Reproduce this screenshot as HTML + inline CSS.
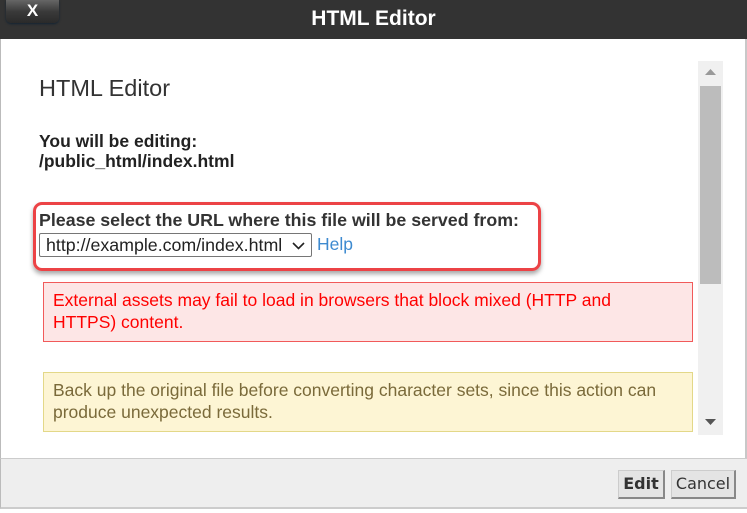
<!DOCTYPE html>
<html><head><style>
*{box-sizing:border-box;margin:0;padding:0}
body{width:747px;height:513px;overflow:hidden;background:#fff;font-family:"Liberation Sans",Arial,sans-serif;position:relative}
.top{position:absolute;left:0;top:0;width:747px;height:39px;background:#333;color:#fff;font-weight:bold;font-size:21px;text-align:center;line-height:38px}
.x{position:absolute;left:6px;top:0;width:53px;height:23px;background:linear-gradient(#666,#3a3a3a 50%,#2a2a2a);border-radius:0 0 5px 5px;box-shadow:0 1px 2px #123;color:#fff;font-size:17px;line-height:21px;text-align:center}
.body{position:absolute;left:0;top:39px;width:747px;height:420px;border-left:1px solid #bbb;border-right:2px solid #c8c8c8}
.abs{position:absolute}
.t{color:#333}
.sb{position:absolute;left:698px;top:61px;width:25px;height:374px;background:#f0f0f0}
.th{position:absolute;left:700px;top:86px;width:21px;height:198px;background:#bcbcbc}
.foot{position:absolute;left:0;top:458px;width:747px;height:51px;background:#eee;border-top:1px solid #ccc;border-bottom:2px solid #ccc;border-left:1px solid #bbb}
.btn{position:absolute;top:470px;height:29px;background:#e4e4e4;border:1px solid #ccc;border-right:2px solid #888;border-bottom:2px solid #888;font-family:"DejaVu Sans",sans-serif;font-size:16px;line-height:26px;text-align:center;color:#333}
</style></head><body>
<div class="top">HTML Editor<div class="x">X</div></div>
<div class="body"></div>
<div class="abs t" style="left:39px;top:75px;font-size:23.5px">HTML Editor</div>
<div class="abs" style="left:39px;top:131px;font-size:17.5px;font-weight:bold;color:#222;line-height:20px">You will be editing:<br>/public_html/index.html</div>
<div class="abs" style="left:33px;top:202px;width:508px;height:69px;border:3px solid #ec4346;border-radius:9px;box-shadow:0 3px 5px rgba(0,0,0,.35)"></div>
<div class="abs" style="left:39px;top:210px;font-size:17.8px;font-weight:bold;color:#333;white-space:nowrap">Please select the URL where this file will be served from:</div>
<div class="abs" style="left:39px;top:233px;width:273px;height:24px;border:1px solid #767676;border-radius:2px;font-size:17.8px;color:#222;padding-left:6px;line-height:22px;white-space:nowrap">http://example.com/index.html<svg style="position:absolute;right:6px;top:8px" width="13" height="8" viewBox="0 0 13 8"><path d="M1 1l5.5 5.5L12 1" fill="none" stroke="#222" stroke-width="1.6"/></svg></div>
<div class="abs" style="left:317px;top:234px;font-size:17.5px;color:#3d8ad0">Help</div>
<div class="abs" style="left:43px;top:282px;width:650px;height:60px;background:#fde6e6;border:1px solid #f15a5a;color:#f00;font-size:17.5px;line-height:22px;padding:6px 9px">External assets may fail to load in browsers that block mixed (HTTP and<br>HTTPS) content.</div>
<div class="abs" style="left:43px;top:372px;width:650px;height:60px;background:#fdf5d4;border:1px solid #e3d888;color:#7a6a3a;font-size:17.5px;line-height:22px;padding:6px 9px">Back up the original file before converting character sets, since this action can produce unexpected results.</div>
<div class="sb"></div><div class="th"></div>
<svg class="abs" style="left:705px;top:69px" width="11" height="7"><path d="M0 6L5.5 0L11 6Z" fill="#999"/></svg>
<svg class="abs" style="left:705px;top:419px" width="11" height="7"><path d="M0 0L5.5 6L11 0Z" fill="#555"/></svg>
<div class="foot"></div>
<div class="btn" style="left:618px;width:47px;font-weight:bold">Edit</div>
<div class="btn" style="left:671px;width:65px">Cancel</div>
</body></html>
